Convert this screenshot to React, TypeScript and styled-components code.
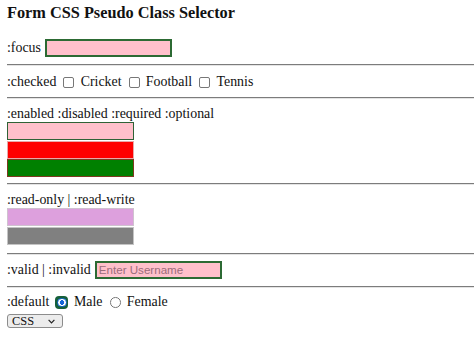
import styled, { createGlobalStyle } from "styled-components";

const GlobalStyle = createGlobalStyle`
  html, body {
    margin: 0;
    padding: 0;
    background: #ffffff;
  }
  body {
    font-family: "Liberation Serif", "Times New Roman", serif;
    color: #111111;
  }
`;

const Page = styled.div`
  padding-left: 7px;
  font-size: 13.9px;
`;

const Title = styled.h3`
  margin: 3px 0 0;
  font-size: 16.3px;
  line-height: 20px;
  font-weight: bold;
`;

const Row = styled.div<{ $top?: number; $height?: number }>`
  display: flex;
  align-items: center;
  height: ${({ $height }) => $height ?? 18}px;
  margin-top: ${({ $top }) => $top ?? 0}px;
  white-space: nowrap;
`;

const Label = styled.div`
  height: 16px;
  line-height: 16px;
  white-space: nowrap;
`;

const Rule = styled.hr<{ $above: number; $below: number }>`
  height: 0;
  margin: ${({ $above, $below }) => `${$above}px 0 ${$below}px`};
  border: none;
  border-top: 1.5px solid #7c7c7c;
  border-bottom: 1px solid #e4e4e4;
`;

const Field = styled.input<{ $bg: string; $border: string; $width?: number }>`
  box-sizing: border-box;
  display: block;
  width: ${({ $width }) => $width ?? 127}px;
  height: 18px;
  margin: 0;
  padding: 0 2px;
  background: ${({ $bg }) => $bg};
  border: ${({ $border }) => $border};
  border-radius: 0;
  outline: none;
  font-family: "Liberation Sans", Arial, sans-serif;
  font-size: 11.6px;
  color: #111;

  &::placeholder {
    color: #9c6c7a;
  }
`;

const InlineField = styled(Field)`
  margin-left: 4px;
`;

const Stack = styled.div`
  display: flex;
  flex-direction: column;
  gap: 0.5px;
`;

const Check = styled.input`
  appearance: none;
  box-sizing: border-box;
  width: 11px;
  height: 11px;
  margin: 0 6.3px 0 7px;
  border: 1px solid #777777;
  border-radius: 2px;
  background: #ffffff;
  flex: none;
`;

const Radio = styled.input`
  appearance: none;
  box-sizing: border-box;
  width: 10.7px;
  height: 10.7px;
  margin: 0 6.3px 0 7.4px;
  border: 1px solid #777777;
  border-radius: 50%;
  background: #ffffff;
  flex: none;

  &:checked {
    width: 9.5px;
    height: 9.5px;
    margin: 0;
    border: 1.3px solid #1466d8;
    background: radial-gradient(
      circle closest-side,
      #1466d8 0 62%,
      #ffffff 72%
    );
  }
`;

const RadioFrame = styled.span`
  display: flex;
  align-items: center;
  justify-content: center;
  flex: none;
  width: 13px;
  height: 13px;
  margin: 0 5.5px 0 6px;
  border-radius: 4px;
  background: #17603a;
`;

const SelectBox = styled.div`
  box-sizing: border-box;
  display: flex;
  align-items: center;
  justify-content: space-between;
  width: 56px;
  height: 14px;
  margin-top: 4px;
  padding: 0 7px 0 4px;
  background: #ececec;
  border: 1px solid #8c8c8c;
  border-radius: 3px;
  font-size: 12.4px;
  line-height: 12px;
`;

const Chevron = () => (
  <svg width="7" height="5" viewBox="0 0 7 5" aria-hidden>
    <path d="M0.6 0.8 L3.5 3.8 L6.4 0.8" fill="none" stroke="#222" strokeWidth="1.2" />
  </svg>
);

export default function App() {
  return (
    <Page>
      <GlobalStyle />
      <Title>Form CSS Pseudo Class Selector</Title>

      <Row $top={16}>
        <span>:focus</span>
        <InlineField $bg="#ffc0cb" $border="2px solid #2c6a33" />
      </Row>
      <Rule $above={7} $below={7} />

      <Row>
        <span>:checked</span>
        <Check type="checkbox" />
        <span>Cricket</span>
        <Check type="checkbox" />
        <span>Football</span>
        <Check type="checkbox" />
        <span>Tennis</span>
      </Row>
      <Rule $above={6} $below={7} />

      <Label>:enabled :disabled :required :optional</Label>
      <Stack>
        <Field $bg="#ffc0cb" $border="1.7px solid #2f6236" />
        <Field $bg="#ff0000" $border="1px solid #e9a8a8" disabled />
        <Field $bg="#008000" $border="1.7px solid #7d3a1e" required />
      </Stack>
      <Rule $above={6.3} $below={7} />

      <Label>:read-only | :read-write</Label>
      <Stack>
        <Field $bg="#dda0dd" $border="1px solid #cfc2cf" readOnly />
        <Field $bg="#808080" $border="1px solid #c4c4c4" />
      </Stack>
      <Rule $above={8} $below={6} />

      <Row>
        <span>:valid | :invalid</span>
        <InlineField
          $bg="#ffc0cb"
          $border="2px solid #2c6a33"
          placeholder="Enter Username"
          required
        />
      </Row>
      <Rule $above={7} $below={6.5} />

      <Row $height={16}>
        <span>:default</span>
        <RadioFrame>
          <Radio type="radio" name="gender" defaultChecked />
        </RadioFrame>
        <span>Male</span>
        <Radio type="radio" name="gender" />
        <span>Female</span>
      </Row>
      <SelectBox>
        <span>CSS</span>
        <Chevron />
      </SelectBox>
    </Page>
  );
}
